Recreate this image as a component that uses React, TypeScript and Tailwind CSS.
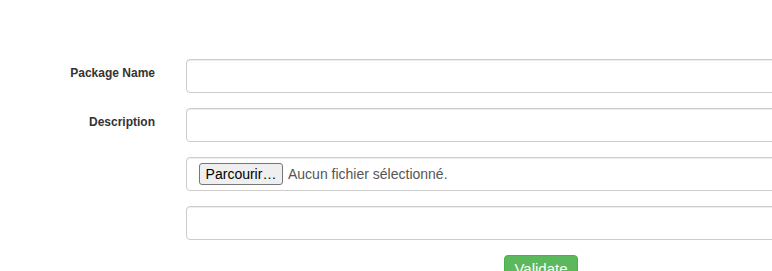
import React from "react";

const inputCls =
  "block h-[34px] w-[800px] shrink-0 rounded-[4px] border border-[#cccccc] bg-white px-3 shadow-[inset_0_1px_1px_rgba(0,0,0,0.075)]";

function Row({ label, children }: { label?: string; children?: React.ReactNode }) {
  return (
    <div className="flex items-start">
      <div className="w-[155px] shrink-0 pt-[6px] text-right text-[12px] font-bold leading-[17px] text-[#333333]">
        {label}
      </div>
      <div className="ml-[31px]">{children}</div>
    </div>
  );
}

export default function App() {
  return (
    <div
      className="h-[271px] w-[772px] overflow-hidden bg-white"
      style={{ fontFamily: '"Liberation Sans", Arial, sans-serif' }}
    >
      <div className="flex flex-col gap-[15px] pt-[59px]">
        <Row label="Package Name">
          <div className={inputCls} />
        </Row>
        <Row label="Description">
          <div className={inputCls} />
        </Row>
        <Row>
          <div className={`${inputCls} flex items-center`}>
            <span className="flex h-[22px] w-[84px] items-center justify-center rounded-[3px] border border-[#767676] bg-[#efefef] text-[14px] leading-none text-black">
              Parcourir…
            </span>
            <span className="ml-[5px] text-[14px] text-[#555555]">Aucun fichier sélectionné.</span>
          </div>
        </Row>
        <Row>
          <div className={inputCls} />
        </Row>
        <div className="pl-[504px]">
          <button className="flex h-[34px] w-[74px] items-start justify-center rounded-[4px] border border-[#4cae4c] bg-[#5cb85c] pt-[5px] text-[15px] leading-[16px] text-white">
            Validate
          </button>
        </div>
      </div>
    </div>
  );
}
